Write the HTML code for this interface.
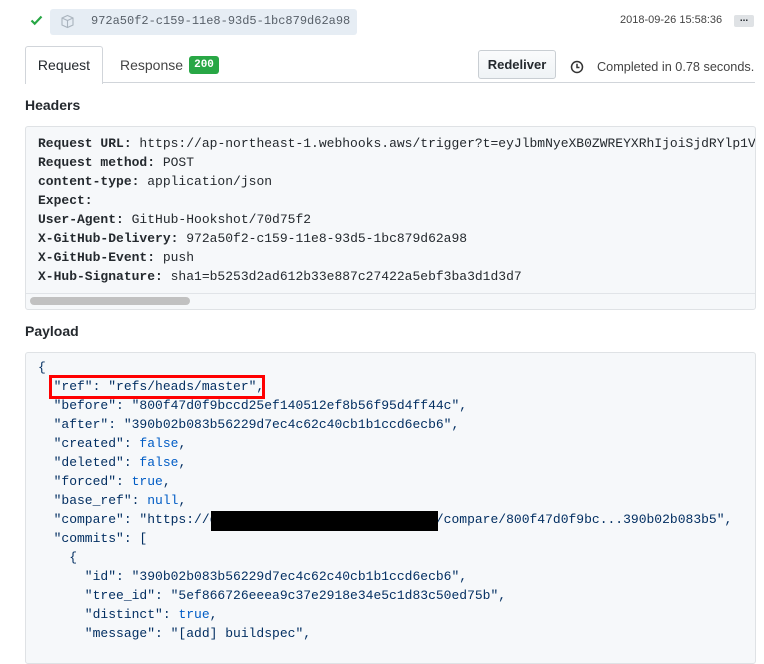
<!DOCTYPE html>
<html><head><meta charset="utf-8"><style>
body{margin:0;width:764px;height:648px;overflow:hidden;background:#fff;font-family:"Liberation Sans",sans-serif;color:#24292e;position:relative}
.a{position:absolute}
.mono{font-family:"Liberation Mono",monospace;font-size:13px}
.box{position:absolute;left:25px;width:729px;background:#f6f8fa;border:1px solid #dfe2e5;border-radius:3px;overflow:hidden}
.ln{position:absolute;white-space:pre;line-height:19px}
.j{color:#032f62}.b{color:#005cc5}
h3{margin:0;font-size:14px;font-weight:bold;position:absolute}
</style></head><body>
<svg class="a" style="left:30px;top:14px" width="13" height="12" viewBox="0 0 13 12"><path d="M1.5 6.5l3.2 3.2L11.5 2.5" stroke="#28a745" stroke-width="2.2" fill="none"/></svg>
<div class="a" style="left:50px;top:9px;width:307px;height:26px;background:#e6edf4;border-radius:3px"></div>
<svg class="a" style="left:60px;top:14px" width="15" height="15" viewBox="0 0 15 15"><path d="M2 4l5.5-2.5L13 4v7l-5.5 2.5L2 11z M2 4l5.5 2.5L13 4 M7.5 6.5v7" stroke="#aab4be" stroke-width="1.1" fill="none"/></svg>
<div class="a mono" style="left:91px;top:14px;color:#586069;font-size:12px">972a50f2-c159-11e8-93d5-1bc879d62a98</div>
<div class="a" style="left:620px;top:14px;font-size:11px;color:#444">2018-09-26 15:58:36</div>
<div class="a" style="left:734px;top:15px;width:20px;height:12px;background:#dfe2e5;border-radius:2px;font-size:10px;line-height:8px;text-align:center;font-weight:bold">...</div>
<div class="a" style="left:25px;top:82px;width:730px;height:1px;background:#d1d5da"></div>
<div class="a" style="left:25px;top:46px;width:76px;height:37px;border:1px solid #d1d5da;border-bottom:none;border-radius:3px 3px 0 0;background:#fff;font-size:14px;line-height:37px;text-align:center">Request</div>
<div class="a" style="left:120px;top:57px;font-size:14px;color:#444">Response</div>
<div class="a mono" style="left:189px;top:56px;width:30px;height:18px;background:#28a745;color:#fff;border-radius:3px;font-size:11px;font-weight:bold;line-height:18px;text-align:center">200</div>
<div class="a" style="left:478px;top:50px;width:76px;height:27px;border:1px solid #c9ced3;border-radius:3px;background:linear-gradient(#fafbfc,#eff3f6);font-size:13px;font-weight:bold;line-height:27px;text-align:center">Redeliver</div>
<svg class="a" style="left:570px;top:60px" width="14" height="14" viewBox="0 0 14 14"><circle cx="7" cy="7" r="5.5" stroke="#333" stroke-width="1.5" fill="none"/><path d="M7 3.8V7.5h2.5" stroke="#333" stroke-width="1.5" fill="none"/></svg>
<div class="a" style="left:597px;top:60px;font-size:12.7px;color:#444">Completed in 0.78 seconds.</div>
<h3 style="left:25px;top:97px">Headers</h3>
<div class="box mono" style="top:126px;height:182px">
<div class="ln" style="left:12px;top:7px"><b>Request URL:</b> https://ap-northeast-1.webhooks.aws/trigger?t=eyJlbmNyeXB0ZWREYXRhIjoiSjdRYlp1VkZ
<b>Request method:</b> POST
<b>content-type:</b> application/json
<b>Expect:</b>
<b>User-Agent:</b> GitHub-Hookshot/70d75f2
<b>X-GitHub-Delivery:</b> 972a50f2-c159-11e8-93d5-1bc879d62a98
<b>X-GitHub-Event:</b> push
<b>X-Hub-Signature:</b> sha1=b5253d2ad612b33e887c27422a5ebf3ba3d1d3d7</div>
<div class="a" style="left:0;top:166px;width:729px;height:1px;background:#e1e4e8"></div>
<div class="a" style="left:4px;top:170px;width:160px;height:8px;background:#c1c1c1;border-radius:4px"></div>
</div>
<h3 style="left:25px;top:323px">Payload</h3>
<div class="box mono" style="top:352px;height:310px">
<div class="ln j" style="left:12px;top:5px">{
  "ref": "refs/heads/master",
  "before": "800f47d0f9bccd25ef140512ef8b56f95d4ff44c",
  "after": "390b02b083b56229d7ec4c62c40cb1b1ccd6ecb6",
  "created": <span class="b">false</span>,
  "deleted": <span class="b">false</span>,
  "forced": <span class="b">true</span>,
  "base_ref": <span class="b">null</span>,
  "compare": "https://g<span style="color:transparent">xxxxxxxxxxxxxxxxxxxxxxxxxxxx</span>/compare/800f47d0f9bc...390b02b083b5",
  "commits": [
    {
      "id": "390b02b083b56229d7ec4c62c40cb1b1ccd6ecb6",
      "tree_id": "5ef866726eeea9c37e2918e34e5c1d83c50ed75b",
      "distinct": <span class="b">true</span>,
      "message": "[add] buildspec",</div>
</div>
<div class="a" style="left:211px;top:511px;width:227px;height:20px;background:#000"></div>
<div class="a" style="left:49px;top:375px;width:210px;height:18px;border:3px solid #f00"></div>
</body></html>
